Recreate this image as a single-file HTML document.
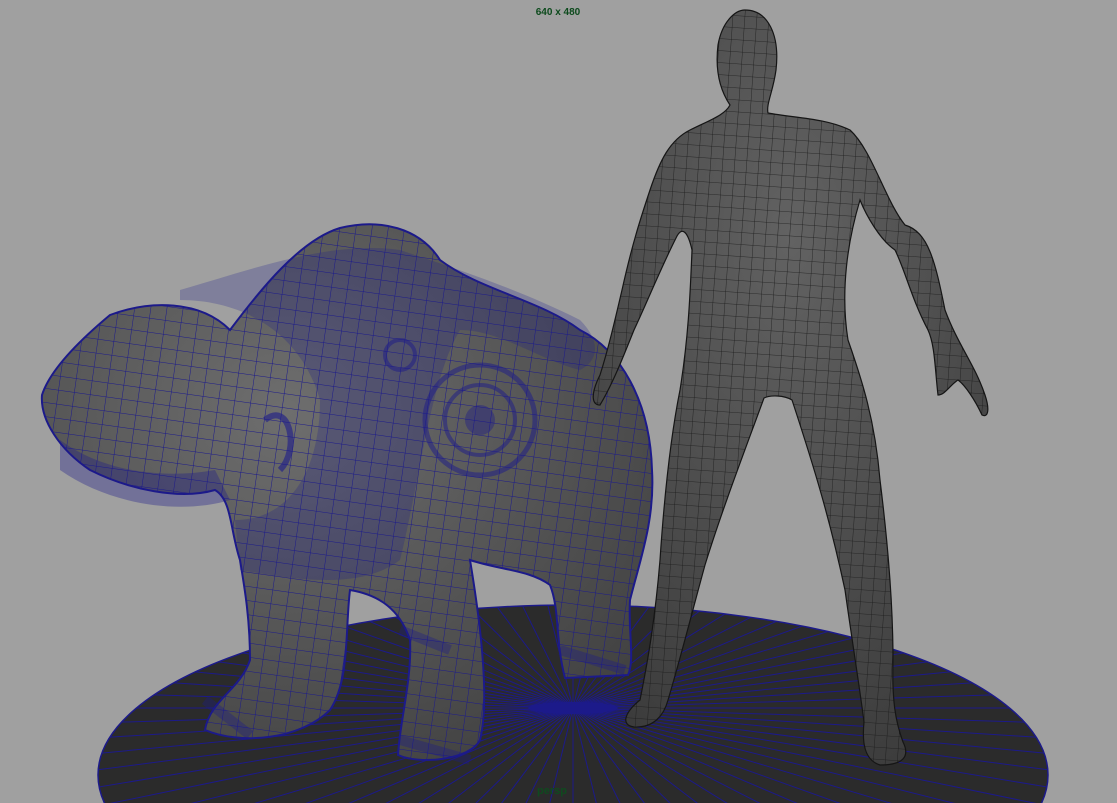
<!DOCTYPE html>
<html><head><style>
html,body{margin:0;padding:0;background:#a0a0a0;overflow:hidden;width:1117px;height:803px}
svg{display:block}
</style></head><body>
<svg width="1117" height="803" viewBox="0 0 1117 803" xmlns="http://www.w3.org/2000/svg">
<defs>
<clipPath id="plat"><ellipse cx="573" cy="775" rx="475" ry="170"/></clipPath>
<pattern id="bw" width="16" height="14" patternUnits="userSpaceOnUse" patternTransform="rotate(8)">
<path d="M0 0H16M0 0V14" stroke="#1c1a8a" stroke-width="1"/>
</pattern>
<pattern id="hw" width="12" height="12" patternUnits="userSpaceOnUse" patternTransform="rotate(4)">
<path d="M0 0H12M0 0V12" stroke="#1a1a1a" stroke-width="0.8"/>
</pattern>
<radialGradient id="bs" cx="0.4" cy="0.35" r="0.8">
<stop offset="0" stop-color="#6e6e6e"/><stop offset="1" stop-color="#3e3e3e"/>
</radialGradient>
<radialGradient id="hs" cx="0.5" cy="0.3" r="0.8">
<stop offset="0" stop-color="#626262"/><stop offset="1" stop-color="#3a3a3a"/>
</radialGradient>
</defs>
<rect width="1117" height="803" fill="#a0a0a0"/>
<text x="558" y="15" text-anchor="middle" font-family="Liberation Sans, sans-serif" font-size="10" font-weight="bold" fill="#0c4a1c">640 x 480</text>
<ellipse cx="573" cy="775" rx="475" ry="170" fill="#2b2b2b" stroke="#1c1a8a" stroke-width="1.5"/>
<g id="rays" stroke="#1c1a8a" stroke-width="1" clip-path="url(#plat)"></g>
<ellipse cx="573" cy="708" rx="45" ry="6" fill="#1c1a8a"/>
<g>
<path d="M230 330 C260 290 300 240 340 228 C380 218 420 228 440 260 C480 290 540 300 580 330 C620 350 650 400 652 470 C655 520 640 560 630 600 C628 630 635 660 628 675 L565 678 C555 640 560 610 550 585 C530 570 500 570 470 560 C480 620 490 700 480 740 C470 760 420 765 398 755 C400 720 412 680 410 640 C400 610 380 595 350 590 C345 630 350 680 330 710 C300 740 240 745 205 730 C210 700 240 690 250 660 C250 620 245 590 240 560 C230 530 232 500 215 490 C180 500 130 490 90 470 C60 450 40 420 42 395 C50 370 80 340 110 315 C150 300 200 300 230 330 Z" fill="url(#bs)"/>
<path d="M230 330 C260 290 300 240 340 228 C380 218 420 228 440 260 C480 290 540 300 580 330 C620 350 650 400 652 470 C655 520 640 560 630 600 C628 630 635 660 628 675 L565 678 C555 640 560 610 550 585 C530 570 500 570 470 560 C480 620 490 700 480 740 C470 760 420 765 398 755 C400 720 412 680 410 640 C400 610 380 595 350 590 C345 630 350 680 330 710 C300 740 240 745 205 730 C210 700 240 690 250 660 C250 620 245 590 240 560 C230 530 232 500 215 490 C180 500 130 490 90 470 C60 450 40 420 42 395 C50 370 80 340 110 315 C150 300 200 300 230 330 Z" fill="url(#bw)" stroke="#1c1a8a" stroke-width="2"/>
<path d="M180 290 C250 270 330 240 400 250 C460 270 520 290 580 320 C600 340 600 360 580 370 C540 360 500 330 460 330 C430 380 420 480 400 560 C360 590 300 580 240 570 L235 520 C290 520 320 470 320 400 C300 330 240 300 180 300 Z" fill="#1c1a8a" opacity="0.25"/>
<circle cx="480" cy="420" r="55" fill="none" stroke="#1c1a8a" stroke-width="5" opacity="0.5"/>
<circle cx="480" cy="420" r="35" fill="none" stroke="#1c1a8a" stroke-width="4" opacity="0.5"/>
<circle cx="480" cy="420" r="15" fill="#1c1a8a" opacity="0.4"/>
<circle cx="400" cy="355" r="15" fill="none" stroke="#1c1a8a" stroke-width="4" opacity="0.5"/>
<path d="M60 440 C100 470 160 480 215 470 L230 500 C180 515 110 505 60 470 Z" fill="#1c1a8a" opacity="0.35"/>
<path d="M265 420 C290 400 300 450 280 470" fill="none" stroke="#1c1a8a" stroke-width="6" opacity="0.6"/>
<path d="M205 700 L250 735 M400 740 L470 760 M560 650 L625 670 M400 630 L450 650" stroke="#1c1a8a" stroke-width="10" opacity="0.35"/>
</g>
<g>
<path d="M745 10 C768 10 780 35 776 70 C773 92 766 104 768 113 C795 118 825 118 850 130 C872 150 885 200 905 225 C928 232 935 260 945 310 C958 345 975 365 985 395 C990 410 988 418 982 415 C975 400 965 385 958 380 C950 385 945 395 938 395 C935 370 935 345 928 330 C912 300 905 270 895 250 C880 240 866 215 860 200 C848 240 840 290 848 340 C862 380 875 420 880 480 C890 560 893 620 893 660 C892 700 895 720 903 742 C910 756 904 765 880 765 C864 760 862 742 864 722 C860 690 852 640 845 590 C830 520 815 470 792 400 C784 395 770 395 764 398 C745 450 722 510 705 565 C690 620 680 660 668 700 C664 715 654 728 634 727 C620 725 625 712 640 700 C648 660 655 620 660 560 C664 500 670 440 680 390 C688 340 690 300 692 250 C688 232 682 225 676 238 C660 270 648 300 634 330 C622 360 612 385 600 405 C592 405 590 395 600 375 C608 350 615 320 622 290 C632 245 640 220 650 190 C660 160 670 140 690 130 C710 120 725 115 730 105 C720 90 715 70 718 45 C722 22 735 10 745 10 Z" fill="url(#hs)"/>
<path d="M745 10 C768 10 780 35 776 70 C773 92 766 104 768 113 C795 118 825 118 850 130 C872 150 885 200 905 225 C928 232 935 260 945 310 C958 345 975 365 985 395 C990 410 988 418 982 415 C975 400 965 385 958 380 C950 385 945 395 938 395 C935 370 935 345 928 330 C912 300 905 270 895 250 C880 240 866 215 860 200 C848 240 840 290 848 340 C862 380 875 420 880 480 C890 560 893 620 893 660 C892 700 895 720 903 742 C910 756 904 765 880 765 C864 760 862 742 864 722 C860 690 852 640 845 590 C830 520 815 470 792 400 C784 395 770 395 764 398 C745 450 722 510 705 565 C690 620 680 660 668 700 C664 715 654 728 634 727 C620 725 625 712 640 700 C648 660 655 620 660 560 C664 500 670 440 680 390 C688 340 690 300 692 250 C688 232 682 225 676 238 C660 270 648 300 634 330 C622 360 612 385 600 405 C592 405 590 395 600 375 C608 350 615 320 622 290 C632 245 640 220 650 190 C660 160 670 140 690 130 C710 120 725 115 730 105 C720 90 715 70 718 45 C722 22 735 10 745 10 Z" fill="url(#hw)" stroke="#151515" stroke-width="1.2"/>
</g>
<text x="552" y="794" text-anchor="middle" font-family="Liberation Sans, sans-serif" font-size="11" font-weight="bold" fill="#0f4a1f">persp</text>
</svg>
<script>
var g=document.getElementById('rays'),s='';
for(var i=0;i<72;i++){var a=i*Math.PI/36;var x=573+Math.cos(a)*700,y=708+Math.sin(a)*250;
s+='<line x1="573" y1="708" x2="'+x.toFixed(1)+'" y2="'+y.toFixed(1)+'"/>';}
g.innerHTML=s;
</script>
</body></html>
